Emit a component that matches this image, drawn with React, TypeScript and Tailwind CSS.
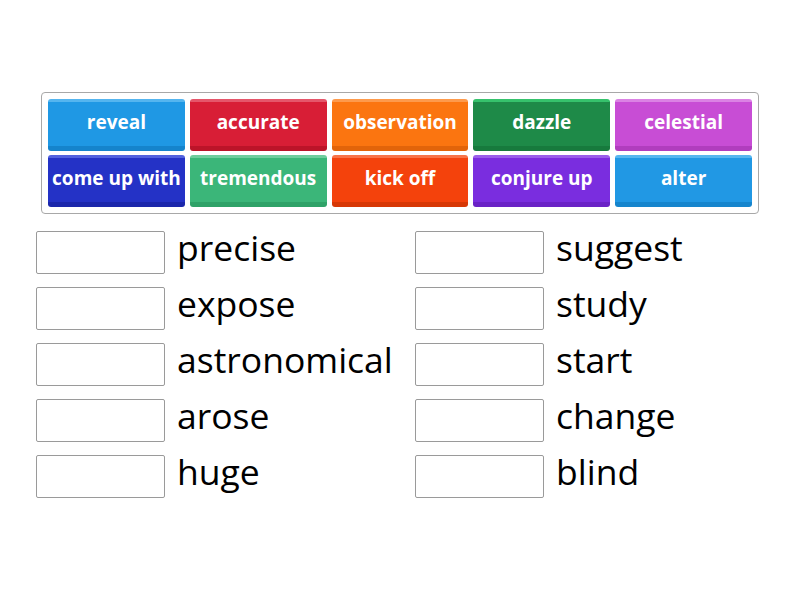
import React from 'react';

interface Tile {
  label: string;
  bg: string;
}

const tiles: Tile[] = [
  { label: 'reveal', bg: 'bg-[#1f98e4] border-t-[#54b5ef] border-b-[#1584cc]' },
  { label: 'accurate', bg: 'bg-[#d81e36] border-t-[#e5566a] border-b-[#bc1429]' },
  { label: 'observation', bg: 'bg-[#fb7510] border-t-[#fd9a4c] border-b-[#e2640a]' },
  { label: 'dazzle', bg: 'bg-[#1e8a48] border-t-[#36c26c] border-b-[#177a3d]' },
  { label: 'celestial', bg: 'bg-[#c84dd5] border-t-[#db82e4] border-b-[#b13dbe]' },
  { label: 'come up with', bg: 'bg-[#2432c6] border-t-[#5262de] border-b-[#1b27ab]' },
  { label: 'tremendous', bg: 'bg-[#3bb679] border-t-[#6fcd9d] border-b-[#2fa268]' },
  { label: 'kick off', bg: 'bg-[#f4420c] border-t-[#f87347] border-b-[#d73806]' },
  { label: 'conjure up', bg: 'bg-[#7a2ddf] border-t-[#9a5eea] border-b-[#6a22c6]' },
  { label: 'alter', bg: 'bg-[#2198e4] border-t-[#56b6ef] border-b-[#1685cd]' },
];

const leftWords = ['precise', 'expose', 'astronomical', 'arose', 'huge'];
const rightWords = ['suggest', 'study', 'start', 'change', 'blind'];

function WordRow({ word }: { word: string }) {
  return (
    <div className="flex items-center h-[43px]">
      <div className="w-[129px] h-[43px] shrink-0 rounded-[2px] border border-[#9a9a9a] bg-white" />
      <span className="ml-[12px] text-[35.5px] leading-none text-black -mt-[9px]">{word}</span>
    </div>
  );
}

export default function App() {
  return (
    <div className="w-[800px] h-[600px] bg-white overflow-hidden" style={{ fontFamily: '"Open Sans", sans-serif' }}>
      <div className="pt-[92px] flex justify-center">
        <div className="w-[718px] rounded-[4px] border border-[#a8a8a8] p-[6px] grid grid-cols-5 gap-x-[5px] gap-y-[4px]">
          {tiles.map((t, i) => (
            <div
              key={i}
              className={`h-[52px] rounded-[3px] border-t-[3px] border-b-[5px] flex items-center justify-center text-white font-bold text-[19px] whitespace-nowrap ${t.bg}`}
            >
              <span className="-mt-[3px]">{t.label}</span>
            </div>
          ))}
        </div>
      </div>

      <div className="mt-[17px] pl-[36px] flex">
        <div className="w-[379px] flex flex-col gap-[13px]">
          {leftWords.map(w => (
            <WordRow key={w} word={w} />
          ))}
        </div>
        <div className="flex flex-col gap-[13px]">
          {rightWords.map(w => (
            <WordRow key={w} word={w} />
          ))}
        </div>
      </div>
    </div>
  );
}
